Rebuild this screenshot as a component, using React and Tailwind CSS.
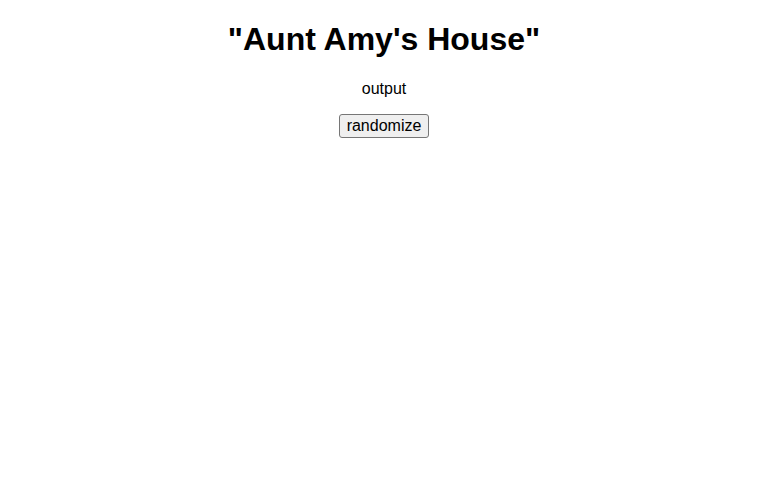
export default function App() {
  return (
    <div className="min-h-screen bg-white text-black text-center" style={{ fontFamily: '"Liberation Sans", Arial, sans-serif' }}>
      <div className="pt-[21px]">
        <h1 className="text-[32px] leading-[37px] font-bold">"Aunt Amy's House"</h1>
        <p className="mt-[22px] text-base leading-[18px]">output</p>
        <div className="mt-4">
          <button className="text-base leading-[18px] px-[7px] py-[2px] border border-[#767676] rounded-[3px] bg-[#efefef] text-black">
            randomize
          </button>
        </div>
      </div>
    </div>
  );
}
